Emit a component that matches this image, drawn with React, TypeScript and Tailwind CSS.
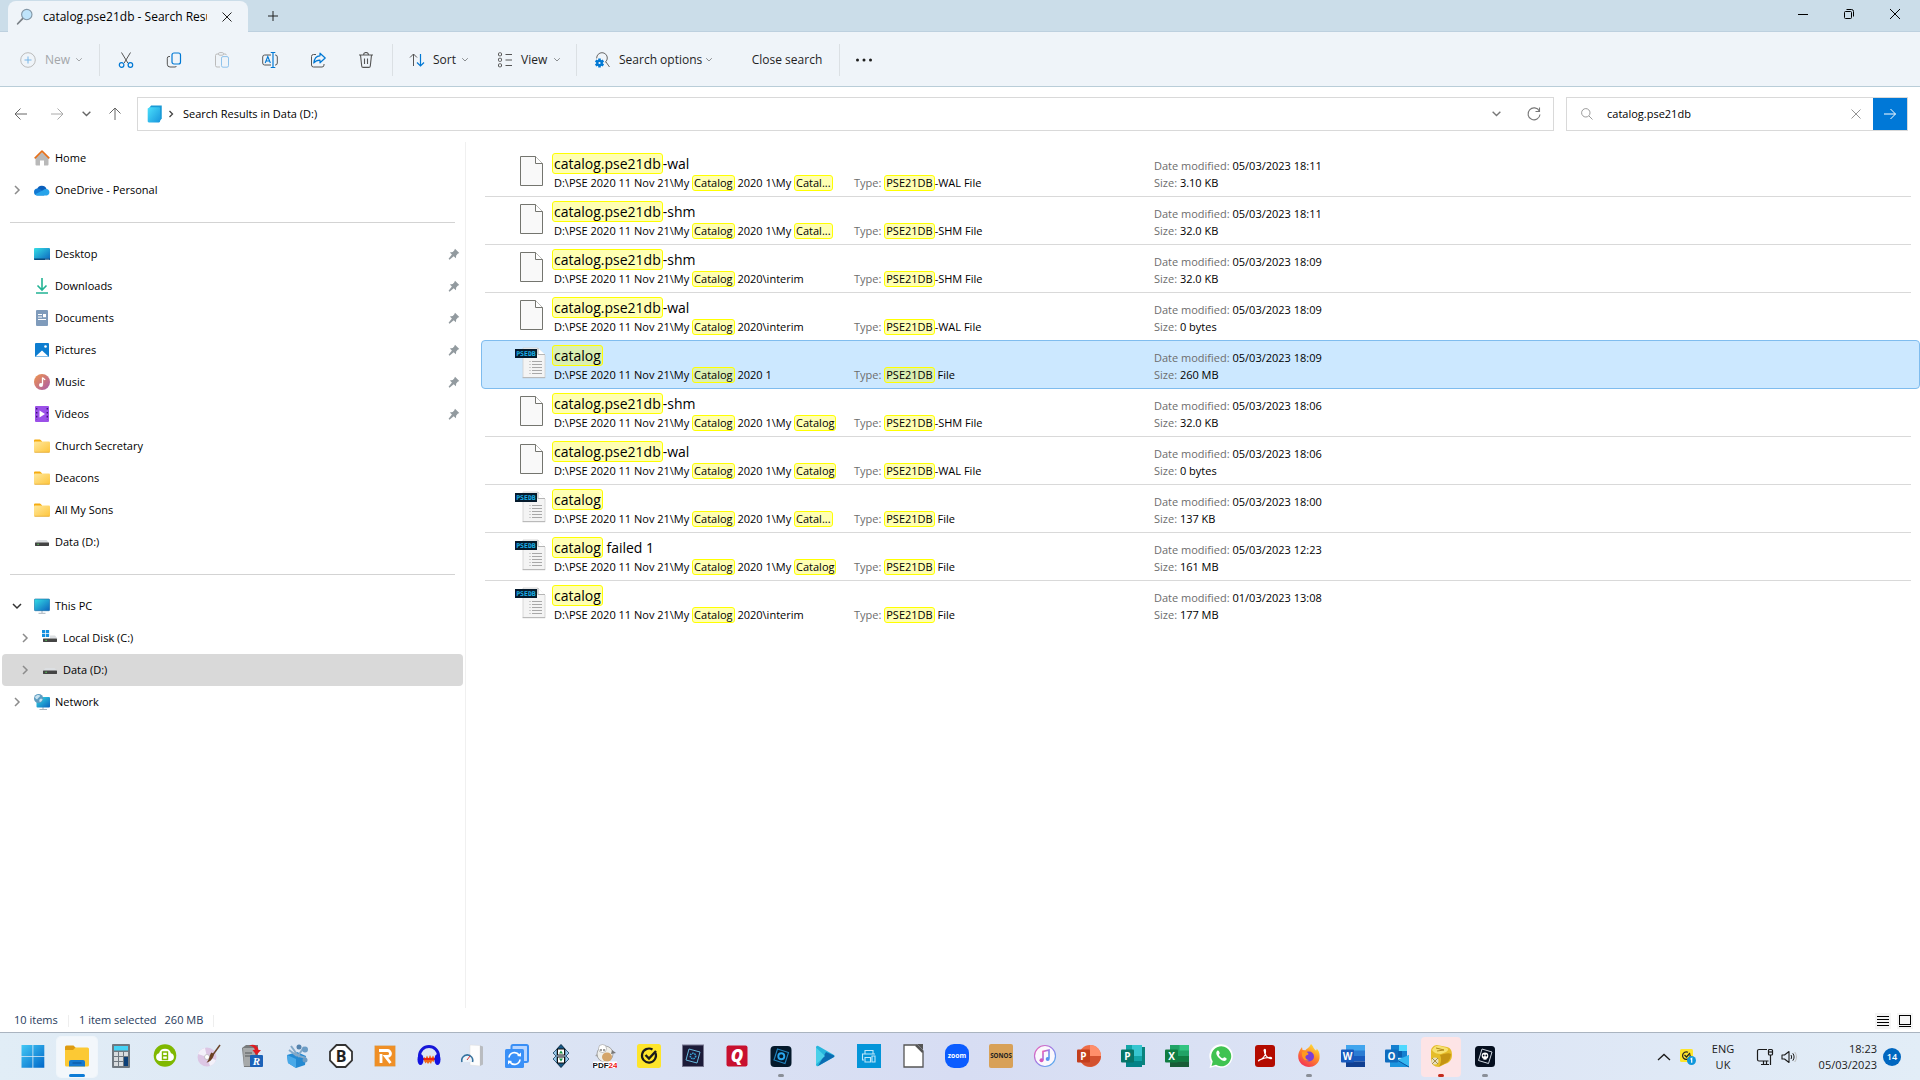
import React from 'react';

type IconProps = { children: React.ReactNode; className?: string };

const Svg16: React.FC<IconProps> = ({ children, className = 'size-4' }) => (
  <svg viewBox="0 0 16 16" fill="none" className={`${className} shrink-0`} aria-hidden="true">{children}</svg>
);

const Svg24: React.FC<IconProps> = ({ children, className = 'size-6' }) => (
  <svg viewBox="0 0 24 24" fill="none" className={`${className} shrink-0`} aria-hidden="true">{children}</svg>
);

const Chevron: React.FC<{ className?: string }> = ({ className = 'w-2 text-[#8a8d90]' }) => (
  <svg viewBox="0 0 8 6" fill="none" className={`${className} shrink-0`} aria-hidden="true">
    <path d="M1.2 1.2 4 4l2.8-2.8" stroke="currentColor" strokeWidth="1" />
  </svg>
);

/* ---------- Title bar ---------- */

const TitleBar: React.FC = () => (
  <header className="flex h-8 items-end border-b border-[#bdd0df] bg-[#cbdde9] pl-2">
    <div className="-mb-px flex h-[31px] w-60 items-center rounded-t-lg bg-[#eff4f9] pl-2 pr-[9px]">
      <Svg16 className="w-[18px]">
        <path d="m1.5 14 4.4-4.6" stroke="#7b8288" strokeWidth="1.6" strokeLinecap="round" />
        <circle cx="9.6" cy="5.8" r="4.6" fill="#bfe4fb" stroke="#8296a6" strokeWidth="1" />
      </Svg16>
      <span className="ml-[9px] w-[164px] overflow-hidden whitespace-nowrap text-[12px] leading-4 text-black">
        catalog.pse21db - Search Results in Data (D:)
      </span>
      <button type="button" aria-label="Close tab" className="ml-auto flex w-6 justify-center">
        <svg viewBox="0 0 10 10" className="size-[10px]" stroke="#222" strokeWidth="1"><path d="m.5.5 9 9m0-9-9 9" /></svg>
      </button>
    </div>
    <button type="button" aria-label="New tab" className="flex h-full w-[49px] items-center justify-center">
      <svg viewBox="0 0 10 10" className="size-[10px]" stroke="#222" strokeWidth="1"><path d="M5 0v10M0 5h10" /></svg>
    </button>
    <div className="ml-auto flex h-full items-center pb-1 pr-0.5">
      <button type="button" aria-label="Minimize" className="flex w-[46px] justify-center">
        <svg viewBox="0 0 10 10" className="size-[10px]" stroke="#000"><path d="M0 5.5h10" /></svg>
      </button>
      <button type="button" aria-label="Restore" className="flex w-[45px] justify-center">
        <svg viewBox="0 0 10 10" className="size-[10px]" fill="none" stroke="#000">
          <rect x=".5" y="2.5" width="7" height="7" rx="1" />
          <path d="M2.5.5h5a2 2 0 0 1 2 2v5" />
        </svg>
      </button>
      <button type="button" aria-label="Close" className="flex w-[47px] justify-center">
        <svg viewBox="0 0 10 10" className="size-[10px]" stroke="#000"><path d="m0 0 10 10M10 0 0 10" /></svg>
      </button>
    </div>
  </header>
);

/* ---------- Toolbar ---------- */

const ToolDivider: React.FC = () => <span className="h-8 w-px bg-[#dbe0e4]" />;

const tools = [
  {
    label: 'Cut',
    icon: (
      <>
        <path d="m3.5.5 6.4 10.6M12.5.5 6.1 11.1" stroke="#555" />
        <circle cx="3.6" cy="13" r="2.3" stroke="#0078d4" strokeWidth="1.2" />
        <circle cx="12.4" cy="13" r="2.3" stroke="#0078d4" strokeWidth="1.2" />
      </>
    ),
  },
  {
    label: 'Copy',
    icon: (
      <>
        <rect x="6" y="1" width="8.5" height="11" rx="2" stroke="#0078d4" strokeWidth="1.2" />
        <path d="M4 4.5H3a1.7 1.7 0 0 0-1.7 1.7v6A2.8 2.8 0 0 0 4 15h5a1.7 1.7 0 0 0 1.5-1" stroke="#555" />
      </>
    ),
  },
  {
    label: 'Paste',
    icon: (
      <>
        <path d="M4.5 2H3a1.5 1.5 0 0 0-1.5 1.5v10A1.5 1.5 0 0 0 3 15h3M9.5 2H11a1.5 1.5 0 0 1 1.5 1.2" stroke="#bbb" />
        <rect x="4.5" y=".6" width="5" height="2.6" rx="1.2" stroke="#bbb" />
        <rect x="7.5" y="4.6" width="7" height="10.6" rx="1.5" stroke="#8fc3ec" />
      </>
    ),
  },
  {
    label: 'Rename',
    icon: (
      <>
        <path d="M9 3H2.7A2 2 0 0 0 .7 5v6a2 2 0 0 0 2 2H9M13 3h.3a2 2 0 0 1 2 2v6a2 2 0 0 1-2 2H13" stroke="#555" />
        <path d="M11 .6v14.8M8.700.5h4.600M8.700 15.500h4.600" stroke="#0078d4" strokeWidth="1.2" />
        <path d="m3.2 11 2.600-6.500L8.400 11M4 9h3.600" stroke="#0078d4" strokeWidth="1.1" />
      </>
    ),
  },
  {
    label: 'Share',
    icon: (
      <>
        <path d="M6 2.500H3.500a2 2 0 0 0-2 2V13a2 2 0 0 0 2 2H12a2 2 0 0 0 2-2v-1" stroke="#555" />
        <path d="M10 1.200 15.200 6 10 10.800V8.200C7 8.200 5.300 9 3.800 11 4.200 7 6.300 4 10 3.800Z" stroke="#0078d4" strokeWidth="1.2" strokeLinejoin="round" />
      </>
    ),
  },
  {
    label: 'Delete',
    icon: <path d="M1 3h14M5.500 3a2.500 2.500 0 0 1 5 0M2.500 3l1.200 11a1.500 1.500 0 0 0 1.500 1.400h5.600a1.500 1.500 0 0 0 1.500-1.400L13.500 3M6.500 6.500v5.500M9.500 6.500v5.500" stroke="#555" strokeWidth="1.1" />,
  },
];

const Toolbar: React.FC = () => (
  <nav className="flex h-[55px] items-center border-b border-[#b9cdd8] bg-[#eff4f9] pt-0.5 text-[12px] text-[#1f1f1f]">
    <button type="button" disabled className="flex w-[99px] items-center pl-5 text-[#a3a6a9]">
      <Svg16>
        <circle cx="8" cy="8" r="7.3" stroke="#bbb" />
        <path d="M8 4.500v7M4.500 8h7" stroke="#76b5e8" />
      </Svg16>
      <span className="ml-[9px] w-[30px] text-left">New</span>
      <Chevron className="w-2 text-[#a3a6a9]" />
    </button>
    <ToolDivider />
    <div className="flex px-0.5">
      {tools.map((tool) => (
        <button type="button" key={tool.label} aria-label={tool.label} className="flex w-12 justify-center">
          <Svg16>{tool.icon}</Svg16>
        </button>
      ))}
    </div>
    <ToolDivider />
    <button type="button" className="flex w-[87px] items-center pl-4">
      <Svg16>
        <path d="M4.500 14V2M1 5.500 4.500 2 8 5.500" stroke="#555" />
        <path d="M11.500 2v12M8 10.500l3.500 3.500 3.500-3.500" stroke="#0078d4" strokeWidth="1.2" />
      </Svg16>
      <span className="ml-2 w-7 text-left">Sort</span>
      <Chevron />
    </button>
    <button type="button" className="flex w-[96px] items-center pl-[17px]">
      <Svg16>
        <g stroke="#555">
          <rect x="1.5" y=".8" width="3" height="3" rx=".8" />
          <rect x="1.5" y="6.3" width="3" height="3" rx=".8" />
          <rect x="1.5" y="11.8" width="3" height="3" rx=".8" />
          <path d="M8.500 2.500H15M8.500 8H15M8.500 13.500H15" />
        </g>
      </Svg16>
      <span className="ml-2 w-8 text-left">View</span>
      <Chevron />
    </button>
    <ToolDivider />
    <button type="button" className="flex w-[156px] items-center pl-[17px]">
      <Svg16>
        <circle cx="8" cy="6" r="5.3" stroke="#666" />
        <path d="m12 10 3.500 5" stroke="#666" />
        <circle cx="5.5" cy="11" r="5.5" fill="#eff4f9" />
        <path d="M5.500 6.500v9M1.600 8.700l7.800 4.600M9.400 8.700l-7.800 4.600" stroke="#0078d4" strokeWidth="2.6" />
        <circle cx="5.5" cy="11" r="3.3" fill="#0078d4" />
        <circle cx="5.5" cy="11" r="1.1" fill="#eff4f9" />
      </Svg16>
      <span className="ml-[9px] w-[86px] whitespace-nowrap text-left">Search options</span>
      <Chevron />
    </button>
    <button type="button" className="w-[106px] whitespace-nowrap pl-0.5 text-center">Close search</button>
    <ToolDivider />
    <button type="button" aria-label="See more" className="flex w-12 justify-center">
      <Svg16><g fill="#1f1f1f"><circle cx="1.5" cy="8" r="1.5" /><circle cx="8" cy="8" r="1.5" /><circle cx="14.5" cy="8" r="1.5" /></g></Svg16>
    </button>
  </nav>
);

/* ---------- Address bar ---------- */

const AddressBar: React.FC = () => (
  <div className="flex h-[55px] items-center gap-3 pb-px pl-[13px] pr-3 text-[12px]">
    <div className="flex w-28 items-center">
      <button type="button" aria-label="Back" className="w-9"><Svg16><path d="M14 8H2m5.500-5.500L2 8l5.500 5.500" stroke="#666" /></Svg16></button>
      <button type="button" aria-label="Forward" className="w-8"><Svg16><path d="M2 8h12M8.500 2.500 14 8l-5.500 5.500" stroke="#aaa" /></Svg16></button>
      <button type="button" aria-label="Recent locations" className="w-[26px]"><Chevron className="w-[11px] text-[#666]" /></button>
      <button type="button" aria-label="Up"><Svg16><path d="M8 14V2M2.500 7.500 8 2l5.500 5.500" stroke="#666" /></Svg16></button>
    </div>
    <div className="flex h-[34px] grow items-center border border-[#d9d9d9] bg-white pl-2">
      <Svg16 className="w-[18px]">
        <path d="M3 2.500 4.500.500H14v11.500l-1.500 2Z" fill="#199ad6" />
        <path d="M1.500 3 3.500 2h8a1 1 0 0 1 1 1V14.500a1 1 0 0 1-1 1h-9a1 1 0 0 1-1-1Z" fill="url(#addr)" />
        <defs><linearGradient id="addr" x1="0" y1="0" x2="1" y2="1"><stop stopColor="#4be0fb" /><stop offset="1" stopColor="#1996dd" /></linearGradient></defs>
      </Svg16>
      <svg viewBox="0 0 6 8" fill="none" className="ml-1 w-[6px]"><path d="m1.500 1 3 3-3 3" stroke="#444" strokeWidth="1.3" /></svg>
      <span className="ml-[9px] text-[11px]">Search Results in Data (D:)</span>
      <button type="button" aria-label="Previous locations" className="ml-auto"><Chevron className="w-[11px] text-[#777]" /></button>
      <button type="button" aria-label="Refresh" className="ml-6 mr-[11px]">
        <Svg16><path d="M13.300 5A6 6 0 1 0 14 8.500M13.500 1.500V5.500H9.500" stroke="#777" strokeWidth="1.1" /></Svg16>
      </button>
    </div>
    <form className="flex h-[34px] w-[342px] items-center border border-[#d9d9d9] bg-white pl-[14px]">
      <svg viewBox="0 0 12 12" fill="none" stroke="#999" className="size-3"><circle cx="4.8" cy="4.8" r="4.2" /><path d="m8 8 3.500 3.500" /></svg>
      <input aria-label="Search" defaultValue="catalog.pse21db" className="ml-[14px] min-w-0 grow text-[11px] outline-none" />
      <button type="reset" aria-label="Clear search" className="mr-3">
        <svg viewBox="0 0 10 10" className="size-[10px]" stroke="#888" strokeWidth=".9"><path d="m.5.5 9 9m0-9-9 9" /></svg>
      </button>
      <button type="button" aria-label="Go" className="flex h-8 w-[34px] items-center justify-center bg-[#0078d7]">
        <svg viewBox="0 0 12 12" fill="none" className="size-3" stroke="#fff" strokeWidth="1"><path d="M0 6h11.500M6.500 1l5 5-5 5" /></svg>
      </button>
    </form>
  </div>
);

/* ---------- Navigation pane ---------- */

const drive = (
  <>
    <path d="M3.500 6h9L15 9H1Z" fill="#dcdfe2" />
    <rect x="1" y="8.5" width="14" height="3.5" rx=".4" fill="#444" />
    <rect x="3.5" y="9.7" width="1.2" height="1.2" fill="#5be35b" />
  </>
);

const folder = (
  <>
    <path d="M0 2.500A1 1 0 0 1 1 1.500h5l2 1.700V6H0Z" fill="#f6ab0e" />
    <rect y="3.5" width="16" height="11" rx="1" fill="url(#fold)" />
    <path d="M.5 14.300h15" stroke="#e0a42e" strokeWidth=".7" />
    <defs><linearGradient id="fold" x1="0" y1="0" x2="1" y2="1"><stop stopColor="#ffe89c" /><stop offset="1" stopColor="#fec53c" /></linearGradient></defs>
  </>
);

const screenFill = (
  <defs><linearGradient id="scr" x1="0" y1="0" x2="1" y2="1"><stop stopColor="#35dfe6" /><stop offset="1" stopColor="#0c62bd" /></linearGradient></defs>
);

const home = (
  <>
    <path d="M8 2.500 1.500 8v6.500a1 1 0 0 0 1 1H6v-5h4v5h3.500a1 1 0 0 0 1-1V8Z" fill="#b9b9b9" />
    <path d="M.7 8.300 8 1.200l7.300 7.100" stroke="#e4701b" strokeWidth="1.7" strokeLinejoin="round" />
  </>
);

const oneDrive = (
  <>
    <path d="M3 7.500A5 5 0 0 1 12.500 7L9 12H2Z" fill="#0a5ebb" />
    <path d="M3.500 6.500c3 0 5.500 3.500 8.500 4l-2 3H3.500a3.500 3.500 0 0 1 0-7Z" fill="#1278d2" />
    <path d="M1.200 12.200 9 8.200a4.500 4.500 0 0 1 3.500-1.200 3.300 3.300 0 0 1 .3 6.500H3.500a3 3 0 0 1-2.300-1.300Z" fill="#27a3ea" />
  </>
);

const desktop = (
  <>
    {screenFill}
    <rect y="2" width="16" height="12" rx="1" fill="url(#scr)" />
    <path d="M0 12.500h16V13a1 1 0 0 1-1 1H1a1 1 0 0 1-1-1Z" fill="#0b4a7d" />
    <path d="M11.500 13.300h3" stroke="#fff" strokeWidth=".8" strokeDasharray="1 1" />
  </>
);

const downloads = <path d="M8 0v12M3.500 7.500 8 12l4.500-4.500M2 15h12" stroke="#22b394" strokeWidth="1.6" />;

const documents = (
  <>
    <rect x="2" width="12" height="16" rx="1" fill="#7f9bbb" />
    <path d="M4 4.500h4M4 7h4M4 9.500h8" stroke="#fff" strokeWidth="1" />
    <rect x="9" y="4" width="3" height="3.2" fill="#fff" />
  </>
);

const pictures = (
  <>
    <rect x="1" y="1" width="14" height="14" rx="1" fill="#0d7dd0" />
    <path d="m1.500 14.500 6.500-6 6.500 6Z" fill="#fff" />
    <circle cx="11.5" cy="4.5" r="1.3" fill="#fff" />
  </>
);

const music = (
  <>
    <defs><linearGradient id="mus" x1="0" y1="0" x2="1" y2="1"><stop stopColor="#f0954b" /><stop offset="1" stopColor="#a85aac" /></linearGradient></defs>
    <circle cx="8" cy="8" r="8" fill="url(#mus)" />
    <path d="M8.500 10.500V3.500c.5 1.300 2 1.200 2.500 2.500" stroke="#fff" strokeWidth="1.3" />
    <circle cx="7" cy="11" r="2" fill="#fff" />
  </>
);

const videos = (
  <>
    <rect x="1" width="14" height="16" rx="1" fill="#9b50e8" />
    <path d="M2.700 2v12M13.300 2v12" stroke="#3b1376" strokeWidth="1.4" strokeDasharray="1.6 2.3" />
    <path d="m5.500 4.500 5.500 3.500-5.500 3.500Z" fill="#fff" />
  </>
);

const thisPc = (
  <>
    {screenFill}
    <path d="M8 12v3M4.500 15.300h7" stroke="#a8b3bd" strokeWidth="1" />
    <rect x=".3" y="1" width="15.4" height="11.7" rx="1" fill="url(#scr)" stroke="#12689f" strokeWidth=".6" />
  </>
);

const localDisk = (
  <>
    <path d="M0 0h3.200v3.200H0zM3.900 0h3.200v3.200H3.900zM0 3.900h3.200v3.200H0zM3.900 3.900h3.200v3.200H3.900z" fill="#1690e0" />
    <path d="M8 5.500h5L15.500 8.500H8Z" fill="#dcdfe2" />
    <rect x="1" y="8.5" width="14" height="3.5" rx=".4" fill="#444" />
    <rect x="3.5" y="9.7" width="1.2" height="1.2" fill="#5be35b" />
  </>
);

const network = (
  <>
    {screenFill}
    <path d="M9 13v2M5.500 15.500h7.500" stroke="#a8b3bd" strokeWidth="1" />
    <rect x="2.5" y="3" width="13.5" height="10.5" rx="1" fill="url(#scr)" />
    <circle cx="4.6" cy="4.6" r="4.6" fill="#5e9cc0" />
    <path d="M1 3c2-2.500 4-2 5-1.500S4 4 3.500 5 1 4.500 1 3ZM6 5c1.500-.5 2.500 0 2.500.5S7 8 6 8s-1-2.500 0-3Z" fill="#c6e2f0" />
  </>
);

type NavItem = { label: string; icon: React.ReactNode; arrow?: 'right' | 'down'; child?: boolean; pinned?: boolean; active?: boolean };

const navGroups: NavItem[][] = [
  [
    { label: 'Home', icon: home },
    { label: 'OneDrive - Personal', icon: oneDrive, arrow: 'right' },
  ],
  [
    { label: 'Desktop', icon: desktop, pinned: true },
    { label: 'Downloads', icon: downloads, pinned: true },
    { label: 'Documents', icon: documents, pinned: true },
    { label: 'Pictures', icon: pictures, pinned: true },
    { label: 'Music', icon: music, pinned: true },
    { label: 'Videos', icon: videos, pinned: true },
    { label: 'Church Secretary', icon: folder },
    { label: 'Deacons', icon: folder },
    { label: 'All My Sons', icon: folder },
    { label: 'Data (D:)', icon: drive },
  ],
  [
    { label: 'This PC', icon: thisPc, arrow: 'down' },
    { label: 'Local Disk (C:)', icon: localDisk, arrow: 'right', child: true },
    { label: 'Data (D:)', icon: drive, arrow: 'right', child: true, active: true },
    { label: 'Network', icon: network, arrow: 'right' },
  ],
];

const NavRow: React.FC<{ item: NavItem }> = ({ item }) => (
  <li className={`flex h-8 items-center rounded-sm pr-[3px] ${item.child ? 'pl-4' : 'pl-2'} ${item.active ? 'bg-[#d9d9d9]' : ''}`}>
    <span className="flex w-6 items-center pl-px">
      {item.arrow && (
        <svg viewBox="0 0 12 12" fill="none" className="size-3" strokeWidth="1.5">
          {item.arrow === 'down' ? <path d="m2 4 4 4 4-4" stroke="#333" /> : <path d="m4 2 4 4-4 4" stroke="#8c8c8c" />}
        </svg>
      )}
    </span>
    <a href="#" className="flex items-center">
      <Svg16>{item.icon}</Svg16>
      <span className="ml-[5px] whitespace-nowrap">{item.label}</span>
    </a>
    {item.pinned && (
      <svg viewBox="0 0 12 12" className="ml-auto w-3" fill="#929a9f" aria-hidden="true">
        <path d="M7 .8 11.300 5l-1.600.8-1.500 1.700-.3 2.700L5.700 8.200 1.500 11.700.6 10.800l3.300-4.300L1.800 4.400l2.900-.3L6.200 2.500Z" />
      </svg>
    )}
  </li>
);

const NavPane: React.FC = () => (
  <aside className="w-[466px] shrink-0 border-r border-[#f0f0f0] px-0.5 text-[11px]">
    {navGroups.map((group, i) => (
      <ul key={i}>
        {group.map((item) => <NavRow key={item.label} item={item} />)}
        {i < navGroups.length - 1 && (
          <li aria-hidden="true" className="mx-2 flex h-8 items-center"><span className="h-px grow bg-[#d3d3d3]" /></li>
        )}
      </ul>
    ))}
  </aside>
);

/* ---------- Result list ---------- */

type ResultFile = { name: string; path: string; type: string; date: string; size: string; db?: boolean; selected?: boolean };

const files: ResultFile[] = [
  { name: '[catalog.pse21db]-wal', path: 'D:\\PSE 2020 11 Nov 21\\My [Catalog] 2020 1\\My [Catal...]', type: '[PSE21DB]-WAL File', date: '05/03/2023 18:11', size: '3.10 KB' },
  { name: '[catalog.pse21db]-shm', path: 'D:\\PSE 2020 11 Nov 21\\My [Catalog] 2020 1\\My [Catal...]', type: '[PSE21DB]-SHM File', date: '05/03/2023 18:11', size: '32.0 KB' },
  { name: '[catalog.pse21db]-shm', path: 'D:\\PSE 2020 11 Nov 21\\My [Catalog] 2020\\interim', type: '[PSE21DB]-SHM File', date: '05/03/2023 18:09', size: '32.0 KB' },
  { name: '[catalog.pse21db]-wal', path: 'D:\\PSE 2020 11 Nov 21\\My [Catalog] 2020\\interim', type: '[PSE21DB]-WAL File', date: '05/03/2023 18:09', size: '0 bytes' },
  { name: '[catalog]', path: 'D:\\PSE 2020 11 Nov 21\\My [Catalog] 2020 1', type: '[PSE21DB] File', date: '05/03/2023 18:09', size: '260 MB', db: true, selected: true },
  { name: '[catalog.pse21db]-shm', path: 'D:\\PSE 2020 11 Nov 21\\My [Catalog] 2020 1\\My [Catalog]', type: '[PSE21DB]-SHM File', date: '05/03/2023 18:06', size: '32.0 KB' },
  { name: '[catalog.pse21db]-wal', path: 'D:\\PSE 2020 11 Nov 21\\My [Catalog] 2020 1\\My [Catalog]', type: '[PSE21DB]-WAL File', date: '05/03/2023 18:06', size: '0 bytes' },
  { name: '[catalog]', path: 'D:\\PSE 2020 11 Nov 21\\My [Catalog] 2020 1\\My [Catal...]', type: '[PSE21DB] File', date: '05/03/2023 18:00', size: '137 KB', db: true },
  { name: '[catalog] failed 1', path: 'D:\\PSE 2020 11 Nov 21\\My [Catalog] 2020 1\\My [Catalog]', type: '[PSE21DB] File', date: '05/03/2023 12:23', size: '161 MB', db: true },
  { name: '[catalog]', path: 'D:\\PSE 2020 11 Nov 21\\My [Catalog] 2020\\interim', type: '[PSE21DB] File', date: '01/03/2023 13:08', size: '177 MB', db: true },
];

// Text in square brackets is the part that matched the search
const Matched: React.FC<{ text: string }> = ({ text }) => (
  <>
    {text.split(/(\[.*?\])/).filter(Boolean).map((part, i) =>
      part.startsWith('[') ? (
        <mark key={i} className="inline-block rounded-[3px] border border-[#ffff00] bg-[#ffff00]/30 px-px text-inherit">
          {part.slice(1, -1)}
        </mark>
      ) : (
        <span key={i} className="whitespace-pre">{part}</span>
      )
    )}
  </>
);

const FileIcon: React.FC<{ db?: boolean }> = ({ db }) =>
  db ? (
    <svg viewBox="0 0 32 32" fill="none" className="ml-[33px] size-8" aria-hidden="true">
      <path d="M9 1h15l7 7v22.500H9Z" fill="#f4f4f4" stroke="#cfcfcf" strokeWidth=".8" />
      <path d="M8.500 30.700h22.700" stroke="#aaa" strokeWidth=".8" />
      <path d="M24 1v6.500h7" fill="#fff" stroke="#b5b5b5" />
      <path d="M18 14.500h10M18 17.500h10M18 20.500h10M18 23.500h10M18 26.500h10" stroke="#a8a8a8" />
      <path d="M15.500 14.500h1M15.500 17.500h1M15.500 20.500h1M15.500 23.500h1M15.500 26.500h1" stroke="#a8a8a8" />
      <rect x="1" y="2" width="22" height="9" fill="#051a2c" />
      <text x="12" y="9.2" textAnchor="middle" fontSize="6.5" fontWeight="700" fontFamily="DejaVu Sans Mono, monospace" fill="#1cb2ea">PSEDB</text>
    </svg>
  ) : (
    <svg viewBox="0 0 32 32" fill="none" className="ml-[33px] size-8" aria-hidden="true">
      <path d="M6.500 1.500h15l7 7v22h-22Z" fill="#f9f9f9" stroke="#74756f" />
      <path d="M21.500 1.500v7h7" fill="#fff" stroke="#74756f" />
    </svg>
  );

const ResultRow: React.FC<{ file: ResultFile; last: boolean }> = ({ file, last }) => (
  <li className="relative h-12">
    {file.selected ? (
      <span className="absolute -top-px bottom-0 left-0 right-0 rounded-sm border border-[#7fbcee] bg-[#cce8ff]" />
    ) : (
      !last && <span className="absolute bottom-0 left-1 right-[9px] h-px bg-[#d9d9d9]" />
    )}
    <div className="relative grid h-full grid-cols-[71px_302px_300px_1fr] whitespace-nowrap pt-1 text-[11px] leading-[14px]">
      <div className="pt-[2px]"><FileIcon db={file.db} /></div>
      <div>
        <div className="text-[14px] leading-[19px]"><Matched text={file.name} /></div>
        <div className="mt-px pl-0.5"><Matched text={file.path} /></div>
      </div>
      <div className="pt-[22px]">
        <span className="text-[#6d6d6d]">Type: </span>
        <Matched text={file.type} />
      </div>
      <div className="flex flex-col gap-[3px] pt-[6px]">
        <div><span className="text-[#6d6d6d]">Date modified: </span>{file.date}</div>
        <div><span className="text-[#6d6d6d]">Size: </span>{file.size}</div>
      </div>
    </div>
  </li>
);

const StatusBar: React.FC = () => (
  <footer className="flex h-6 items-center whitespace-nowrap pl-[14px] pr-[7px] pt-px text-[11px] text-[#1e395b]">
    <span className="w-[54px]">10 items</span>
    <span className="h-3 w-px bg-[#eee]" />
    <span className="flex w-36 gap-2 pl-[10px]">
      <span>1 item selected</span>
      <span>260 MB</span>
    </span>
    <span className="h-3 w-px bg-[#eee]" />
    <div className="ml-auto flex gap-[6px]">
      <button type="button" aria-label="Details view" className="flex size-4 items-center justify-center bg-[#f5f5f5]">
        <svg viewBox="0 0 12 12" className="size-3" stroke="#000"><path d="M0 1.500h12M0 4.500h12M0 7.500h12M0 10.500h12" /></svg>
      </button>
      <button type="button" aria-label="Large icons view" className="flex size-4 items-center justify-center bg-[#f5f5f5]">
        <svg viewBox="0 0 12 12" className="size-3" fill="none" stroke="#000"><rect x=".5" y=".5" width="11" height="9" /><path d="M0 11.500h12" /></svg>
      </button>
    </div>
  </footer>
);

/* ---------- Taskbar ---------- */

const Glyph: React.FC<{ x?: number; y?: number; size?: number; fill?: string; children: string }> = ({ x = 12, y = 16, size = 11, fill = '#fff', children }) => (
  <text x={x} y={y} fontSize={size} fontWeight="700" fontFamily="Open Sans, sans-serif" textAnchor="middle" fill={fill}>{children}</text>
);

const OfficeIcon: React.FC<{ letter: string; tile: string; back: React.ReactNode }> = ({ letter, tile, back }) => (
  <>
    {back}
    <rect x="0" y="5.5" width="13" height="13" rx="1" fill={tile} />
    <Glyph x={6.5} y={15.7} size={10}>{letter}</Glyph>
  </>
);

type App = { name: string; icon: React.ReactNode; state?: 'active' | 'open' | 'alert' };

const apps: App[] = [
  {
    name: 'Start',
    icon: (
      <>
        <defs><linearGradient id="win" x1="0" y1="0" x2="1" y2="1"><stop stopColor="#43c8f5" /><stop offset="1" stopColor="#0067c9" /></linearGradient></defs>
        <path d="M.5 1h11v11H.5zM12.300 1h11v11h-11zM.5 12.800h11v11H.5zM12.300 12.800h11v11h-11z" fill="url(#win)" />
      </>
    ),
  },
  {
    name: 'File Explorer',
    state: 'active',
    icon: (
      <>
        <path d="M0 3a1.500 1.500 0 0 1 1.500-1.500h7L11 4v3H0Z" fill="#de9b10" />
        <path d="M0 6h8l2.500-2.500H22.500A1.500 1.500 0 0 1 24 5v16a1.500 1.500 0 0 1-1.500 1.500h-21A1.500 1.500 0 0 1 0 21Z" fill="#fcc934" />
        <path d="M4 22.500V18a2 2 0 0 1 2-2h12a2 2 0 0 1 2 2v4.500Z" fill="#1479cf" />
        <path d="M7.500 19h9" stroke="#0a56a1" strokeWidth="1.2" />
      </>
    ),
  },
  {
    name: 'Calculator',
    icon: (
      <>
        <rect x="3" width="18" height="24" rx="1" fill="#6f7880" />
        <rect x="5" y="2" width="14" height="4.5" fill="#45d2f5" />
        <path d="M5 8h4v4H5zM10 8h4v4h-4zM15 8h4v4h-4zM5 13h4v4H5zM10 13h4v4h-4zM5 18h4v4H5zM10 18h4v4h-4z" fill="#d8dcdf" />
        <path d="M15 13h4v9h-4z" fill="#0b3f78" />
      </>
    ),
  },
  {
    name: 'Cloud Storage',
    icon: (
      <>
        <circle cx="12" cy="11.5" r="11.3" fill="#7fb800" />
        <path d="M6.500 17a4 4 0 0 1-.5-7.800 6.300 6.300 0 0 1 12 0 4 4 0 0 1-.5 7.800Z" fill="#fff" />
        <path d="M9.500 8h5v7.500h-5ZM9.500 11.800h5" stroke="#7fb800" strokeWidth="1.4" />
      </>
    ),
  },
  {
    name: 'Disc Label',
    icon: (
      <>
        <circle cx="10" cy="13" r="9.5" fill="#dcc6e4" />
        <path d="m10 13-9-3a9.500 9.500 0 0 1 7-6ZM10 13l9 3a9.500 9.500 0 0 1-6 6Z" fill="#f3f1fa" />
        <circle cx="10" cy="13" r="2.5" fill="#fff" stroke="#aaa" strokeWidth=".6" />
        <path d="m23 1-8 11" stroke="#6b4529" strokeWidth="1.5" />
        <path d="m17 10-2.500-1.500C12 11 13 15 9.500 18.500 13.500 18 16.500 14 17 10Z" fill="#6a3f22" />
      </>
    ),
  },
  {
    name: 'Revo Uninstaller',
    icon: (
      <>
        <path d="m1 4 4-3h12v20l-3 2H3Z" fill="#777a7c" />
        <path d="M2 4h12v18H3Z" fill="#a6a9aa" />
        <path d="M4 9h7M4 12h7" stroke="#55585a" />
        <path d="M8 1.500c6-2 9 1 9.500 4.500h2.500l-4.500 5-4-5h2.300C13.500 3.500 11.500 2 8 1.500Z" fill="#e01b22" />
        <rect x="9" y="11" width="13" height="12" rx="1" fill="#1c62b8" />
        <text x="15.5" y="21" fontSize="11" fontStyle="italic" fontWeight="700" fontFamily="Liberation Serif, serif" textAnchor="middle" fill="#fff">R</text>
      </>
    ),
  },
  {
    name: 'Tool Box',
    icon: (
      <>
        <path d="m2 11 10-3 9 4-1 9-9 3-8-5Z" fill="#2389d2" />
        <path d="m2 11 9 4v9l-8-5Z" fill="#49a9e8" />
        <path d="m6 2 8 11M19 3l-6 9M4 6l8 6M21 14l-7-2" stroke="#84a9c8" strokeWidth="2" />
        <circle cx="14" cy="3" r="2.5" fill="#5382ad" /><circle cx="20" cy="5.5" r="3" fill="#6b9cc5" /><circle cx="20" cy="16" r="2.5" fill="#6b9cc5" />
      </>
    ),
  },
  {
    name: 'Brackets',
    icon: (
      <>
        <path d="M7.500 1h9L23 7.500v9L16.500 23h-9L1 16.500v-9Z" fill="#fff" stroke="#333" strokeWidth="1.8" />
        <Glyph size={16} y={17.8} fill="#222">B</Glyph>
      </>
    ),
  },
  {
    name: 'RoboForm',
    icon: (
      <>
        <rect x="1.5" y="1.5" width="21" height="21" rx="1" fill="#ef8f26" stroke="#d9c5a9" />
        <path d="M6 6.500h8.500a3 3 0 0 1 0 6H12.500l5 6.500M8 10v9" stroke="#fff" strokeWidth="2.8" />
      </>
    ),
  },
  {
    name: 'Audacity',
    icon: (
      <>
        <path d="M2.500 15V12a9.500 9.500 0 0 1 19 0v3" stroke="#1616d8" strokeWidth="3" />
        <path d="m6 15 1.500-2 1 1.500 1.500-3 1.500 3 1.500-3.500 1.500 3 1.500-2.500L18 15l-1.500 3-1.500-1-1 3-1.500-2-1.500 2-1.500-2-1 1.500Z" fill="#f26a16" />
        <path d="M6 15h12" stroke="#e11" strokeWidth="1.5" />
        <ellipse cx="3.5" cy="15.5" rx="3" ry="5.5" fill="#1313e0" /><ellipse cx="20.5" cy="15.5" rx="3" ry="5.5" fill="#1313e0" />
      </>
    ),
  },
  {
    name: 'Disk Benchmark',
    icon: (
      <>
        <path d="m9 1 10 .5V22l-10-1Z" fill="#fdfdfd" stroke="#ddd" strokeWidth=".5" />
        <path d="m19 1.500 3 1v18L19 22Z" fill="#b9bcc0" />
        <path d="M1 18A5.500 5.500 0 1 1 11.500 18" fill="#eef4fa" stroke="#35729f" strokeWidth="1.6" />
        <path d="m6 16 3-4" stroke="#d33" strokeWidth="1" />
      </>
    ),
  },
  {
    name: 'Sync Backup',
    icon: (
      <>
        <rect x="6.5" y="1" width="16.5" height="17" rx="1.5" fill="#b9d6ff" stroke="#3a8ff5" strokeWidth="2" />
        <rect y="5" width="19" height="19" rx="1.5" fill="#3a90f7" />
        <path d="M4 13.500a5.500 5.500 0 0 1 10-2.500M15 15.500A5.500 5.500 0 0 1 5 18" stroke="#fff" strokeWidth="1.7" />
        <path d="m12 12 4 .5V8.500ZM7 17l-4-.5v4Z" fill="#fff" />
      </>
    ),
  },
  {
    name: 'File Compare',
    icon: (
      <>
        <path d="m12 .5 5 5.500H7Z" fill="#155888" stroke="#0a2d45" /><path d="m12 23.500 5-5.500H7Z" fill="#155888" stroke="#0a2d45" />
        <path d="M8 5 4 9l3 3-3 3 4 4ZM16 5l4 4-3 3 3 3-4 4Z" fill="#98c7ea" stroke="#16405e" strokeWidth=".8" />
        <path d="M8.500 5h7v6h-7zM8.500 13h7v6h-7z" fill="#fff" stroke="#111" />
        <path d="m12 6.500 2 3h-4ZM12 17.500l2-3h-4Z" fill="#169347" />
      </>
    ),
  },
  {
    name: 'PDF24',
    icon: (
      <>
        <path d="M6 8 2 12l5 1Z" fill="#aaa" /><ellipse cx="12" cy="10" rx="8" ry="8" fill="#efefeb" stroke="#888" strokeWidth=".7" />
        <circle cx="9.5" cy="4.5" r="4" fill="#fff" stroke="#999" strokeWidth=".6" /><circle cx="8" cy="6" r=".8" fill="#222" /><circle cx="11" cy="6" r=".8" fill="#222" />
        <ellipse cx="14" cy="13" rx="5" ry="4.5" fill="#d4a56a" /><path d="m19 6 4 3-5 1Z" fill="#777" />
        <rect y="17.5" width="24" height="6.5" fill="#fff" />
        <text x="12" y="23.5" textAnchor="middle" fontSize="8" fontWeight="700" fontFamily="Liberation Sans, sans-serif" fill="#111">PDF<tspan fill="#e11">24</tspan></text>
      </>
    ),
  },
  {
    name: 'Norton',
    icon: (
      <>
        <rect width="24" height="24" rx="2.5" fill="#fee52b" />
        <path d="M18.500 9A7 7 0 1 1 15.500 5.500" stroke="#1a1a1a" strokeWidth="2.2" />
        <path d="m8.500 11 3.500 3.500L19 7" stroke="#1a1a1a" strokeWidth="2.4" />
      </>
    ),
  },
  {
    name: 'Elements Editor',
    icon: (
      <>
        <rect x="1.5" y="1" width="21" height="21.5" fill="#1c1b38" stroke="#77778f" />
        <path d="m8 5 11 3-3 11-11-3Z" stroke="#67b9dc" /><circle cx="12" cy="12" r="2.7" stroke="#35a8da" strokeWidth="1.6" strokeDasharray="1.5 .8" />
      </>
    ),
  },
  {
    name: 'Quicken',
    icon: (
      <>
        <rect x="1.5" y="1.5" width="21" height="21" rx="2" fill="#c8102e" />
        <text x="12" y="18" fontSize="17" fontWeight="800" fontStyle="italic" fontFamily="Open Sans, sans-serif" textAnchor="middle" fill="#fff">Q</text>
      </>
    ),
  },
  {
    name: 'Photoshop Elements',
    state: 'open',
    icon: (
      <>
        <rect x="1.5" y="2" width="21" height="21" rx="4" fill="#04192b" />
        <path d="m8.500 5 11 3.500-3.500 11-11-3.500Z" stroke="#2384be" strokeWidth="1.1" /><circle cx="12.3" cy="12.3" r="3" stroke="#2aa7ee" strokeWidth="1.9" />
      </>
    ),
  },
  {
    name: 'Media Player',
    icon: (
      <>
        <path d="M3 3.500A1.500 1.500 0 0 1 5.300 2L21 11a1.300 1.300 0 0 1 0 2L5.300 22A1.500 1.500 0 0 1 3 20.500Z" fill="#27b5dc" />
        <path d="m5 22 8-14 8 3.500a1 1 0 0 1 0 1.500Z" fill="#0b6cb2" /><path d="M3 3.500v17L12 12Z" fill="#4ad0e9" />
      </>
    ),
  },
  {
    name: 'Printer Manager',
    icon: (
      <>
        <rect width="24" height="24" fill="#0495d9" />
        <path d="M8 10V6.500h8V10M7 16H5.500v-6H18M8 13.500h5.500V18H8ZM15 12h3v6h-3Z" stroke="#bfe7fa" strokeWidth="1.1" />
      </>
    ),
  },
  {
    name: 'LibreOffice',
    icon: (
      <>
        <path d="M16 0h6v6Z" fill="#555" />
        <path d="M3 1h12l7 7v15H3Z" fill="#fff" stroke="#555" strokeWidth="1.3" /><path d="m15 1 7 7" stroke="#555" strokeWidth="2.5" />
      </>
    ),
  },
  {
    name: 'Zoom',
    icon: (
      <>
        <rect width="24" height="24" rx="9" fill="#0b5cff" />
        <Glyph size={6.8} y={14}>zoom</Glyph>
      </>
    ),
  },
  {
    name: 'Sonos',
    icon: (
      <>
        <rect width="24" height="24" rx="2" fill="#d8a158" />
        <Glyph size={6.2} y={14.2} fill="#222">SONOS</Glyph>
      </>
    ),
  },
  {
    name: 'iTunes',
    icon: (
      <>
        <defs><linearGradient id="itu" x1="0" y1="0" x2="1" y2="1"><stop stopColor="#f35db0" /><stop offset=".5" stopColor="#9a7de8" /><stop offset="1" stopColor="#45b8f0" /></linearGradient></defs>
        <circle cx="12" cy="12" r="10.5" fill="#fbf8fd" stroke="url(#itu)" strokeWidth="1.2" />
        <path d="M10 16V7.500l6-1.500v8.500" stroke="url(#itu)" strokeWidth="1.7" />
        <circle cx="8.5" cy="16.3" r="2" fill="#d557bd" /><circle cx="14.7" cy="15" r="2" fill="#5a92ee" />
      </>
    ),
  },
  {
    name: 'PowerPoint',
    icon: <OfficeIcon letter="P" tile="#c33e1c" back={<><circle cx="13" cy="12" r="11" fill="#ed6c47" /><path d="M13 1a11 11 0 0 1 11 11H13Z" fill="#ff8f6b" /><path d="M2.500 15A11 11 0 0 0 24 12H13v3Z" fill="#d35230" /></>} />,
  },
  {
    name: 'Publisher',
    icon: <OfficeIcon letter="P" tile="#077568" back={<><path d="M21 3h3v18h-3z" fill="#0a837c" /><path d="M5 1h16v22H5z" fill="#12a5a7" /><path d="M11 1h10v11H11z" fill="#37c6d0" /><path d="M5 17h16v6H5z" fill="#038387" /></>} />,
  },
  {
    name: 'Excel',
    icon: <OfficeIcon letter="X" tile="#107c41" back={<><path d="M5 1h19v22H5z" fill="#21a366" /><path d="M14.500 1H24v5.500h-9.500z" fill="#33c481" /><path d="M5 12h19v5.500H5z" fill="#107c41" /><path d="M5 17.500h19V23H5z" fill="#185c37" /></>} />,
  },
  {
    name: 'WhatsApp',
    icon: (
      <>
        <path d="m.5 24 1.500-6A11.700 11.700 0 1 1 6.500 22.300Z" fill="#fff" />
        <path d="m2.500 22 1.200-4.500a10 10 0 1 1 3.300 3.300Z" fill="#40c351" />
        <path d="M8.500 6.500c-2 1.500-1.500 4.500 1.500 7.500s6.500 4 7.500 1.500c.5-1-.2-1.300-2-2.200-.8-.3-1.200 1.300-2 1-1.800-.8-3-2-3.500-3.300-.2-.8 1-1.200.7-2-.6-1.500-.8-2.700-2.200-2.500Z" fill="#fff" />
      </>
    ),
  },
  {
    name: 'Acrobat',
    icon: (
      <>
        <rect x="2" y="1" width="20" height="22" rx="3" fill="#b30b00" />
        <path d="M6 16.500c5-2 7-6.500 6.300-10.500-.2-1-1.300-.5-1.100.5.500 4 3 7.500 6.500 8 1.300.2 1-1.200-.5-1.200-4 0-7.500 1-10.700 2.500-1.300.7-1 1.300-.5.700Z" stroke="#fff" strokeWidth="1.3" />
      </>
    ),
  },
  {
    name: 'Firefox',
    state: 'open',
    icon: (
      <>
        <defs><linearGradient id="ffx" x1=".8" y1="0" x2=".2" y2="1"><stop stopColor="#ffe93a" /><stop offset=".45" stopColor="#ff8c27" /><stop offset="1" stopColor="#f2295b" /></linearGradient></defs>
        <path d="M14 0c3 3 2 4.500 5 6.500 1-.5.500-2 .5-2 3 2.500 3.500 6.500 3 10-1 5.500-5.500 8.500-10.500 8.500S1 19 1.200 12C1.500 7.500 3.500 5.500 5 3l.5 3 3 .2C10 4.500 12 4 14 0Z" fill="url(#ffx)" />
        <circle cx="12" cy="12.5" r="5" fill="#7b3fd6" /><path d="M5 8c3-1 6 0 6.500 2 .2 1-2.500 1-3 2.500s1 3.500 3.500 3.500c-4 2-8-2-7-8Z" fill="#ff9a1f" />
      </>
    ),
  },
  {
    name: 'Word',
    icon: <OfficeIcon letter="W" tile="#185abd" back={<><path d="M5 1h19v6H5z" fill="#41a5ee" /><path d="M5 6.500h19V12H5z" fill="#2b7cd3" /><path d="M5 12h19v5.500H5z" fill="#185abd" /><path d="M5 17.500h19V23H5z" fill="#103f91" /></>} />,
  },
  {
    name: 'Outlook',
    icon: <OfficeIcon letter="O" tile="#0f6cbd" back={<><path d="M6 1h16v13H6z" fill="#1480d0" /><path d="M14 1h8v6h-8z" fill="#50d9ff" /><path d="M11 7h6v6h-6z" fill="#0b5fae" /><path d="M5 11l9 6 10-6v12H5z" fill="#1c95de" /><path d="m12 16 12 7V11Z" fill="#35b8f1" /><path d="m12 16 12 7" stroke="#0a52a0" /></>} />,
  },
  {
    name: 'Fiddler Box',
    state: 'alert',
    icon: (
      <>
        <path d="M2 7c0-3 3-6 6-6l10 2c4 1 5 4 5 8 0 5-3 8-7 9l-6 3c-5 0-8-3-8-8Z" fill="#e5bd2a" />
        <path d="M3 6c2-4 5-5 8-4l7 2c2 1 1 3-1 4l-5 2c-4 0-7-1-9-4Z" fill="#f7e170" />
        <path d="M11 11c3-1 9-3 11-1-.5 6-3 8-6 9.500l-6 3c2-3 3-8 1-11.500Z" fill="#c59413" />
        <path d="m7 4 8 2M8 7l7-1" stroke="#b38c1c" /><circle cx="6" cy="17" r="3.5" fill="#e8e0bf" /><path d="m3 14 6 6M9 14l-6 6" stroke="#a78e45" />
      </>
    ),
  },
  {
    name: 'Organizer',
    state: 'open',
    icon: (
      <>
        <rect x="2" y="2" width="20" height="21" rx="3.5" fill="#050f1f" />
        <path d="m9 5 10 3-3.500 11.500-10-3Z" stroke="#cfd6df" />
        <circle cx="12" cy="11.7" r="3.3" fill="#fff" /><path d="M10.500 14h3v1.700h-3z" fill="#fff" />
        <circle cx="10.7" cy="11.5" r=".9" fill="#050f1f" /><circle cx="13.3" cy="11.5" r=".9" fill="#050f1f" />
      </>
    ),
  },
];

const TaskButton: React.FC<{ app: App }> = ({ app }) => (
  <button
    type="button"
    aria-label={app.name}
    className={`relative mx-0.5 flex h-10 w-10 items-center justify-center rounded pb-0.5 ${
      app.state === 'active' ? 'bg-white/60 ring-1 ring-white/50' : app.state === 'alert' ? 'bg-[#fde4e6]' : ''
    }`}
  >
    <Svg24>{app.icon}</Svg24>
    {app.state === 'active' && <span className="absolute bottom-0 h-[3px] w-4 rounded-full bg-[#0c7bd6]" />}
    {app.state === 'open' && <span className="absolute bottom-0 h-[3px] w-[6px] rounded-full bg-[#8a8f98]" />}
    {app.state === 'alert' && <span className="absolute bottom-0 h-[3px] w-[6px] rounded-full bg-[#c42b1c]" />}
  </button>
);

const Taskbar: React.FC = () => (
  <div className="flex h-12 items-center justify-between border-t border-[#aab4c0] bg-linear-to-r from-[#e1edf6] via-[#d7ddf3] to-[#e2edf7] pl-[11px] pr-[19px]">
    <div className="flex shrink-0">
      {apps.map((app) => <TaskButton key={app.name} app={app} />)}
    </div>
    <div className="flex shrink-0 items-center text-[11px] leading-4 text-[#1b1b1b]">
      <button type="button" aria-label="Show hidden icons">
        <svg viewBox="0 0 14 8" fill="none" className="w-[14px]"><path d="m1 7 6-5.500L13 7" stroke="#1b1b1b" strokeWidth="1.3" /></svg>
      </button>
      <button type="button" aria-label="Norton status" className="ml-[9px]">
        <Svg16>
          <rect width="13" height="13" rx="1.5" fill="#fee52b" />
          <path d="M10 5.500A3.800 3.800 0 1 1 8 3.200M4.500 6l2 2L10 4" stroke="#222" strokeWidth="1.2" />
          <circle cx="11.5" cy="11.5" r="4.5" fill="#1097dc" /><path d="m10.500 10.200 1.200-.8v4.300" stroke="#fff" strokeWidth="1.2" />
        </Svg16>
      </button>
      <button type="button" className="ml-[10px] w-[34px] text-center">ENG<br />UK</button>
      <button type="button" aria-label="Network and volume" className="ml-4 flex items-center gap-[7px]">
        <svg viewBox="0 0 18 18" fill="none" stroke="#1b1b1b" strokeWidth="1.2" className="size-[18px]">
          <path d="M11 1.500H3A1.500 1.500 0 0 0 1.500 3v8.500A1.500 1.500 0 0 0 3 13h9.500M5 16.500h8M7.500 13v3.500M10.500 13v3.500M14.500 7v10" />
          <rect x="12.5" y="1.5" width="4" height="5.5" rx="1" /><path d="M12.500 4h4" />
        </svg>
        <Svg16>
          <path d="M1 6v4h2.500L8 13.500v-11L3.500 6Z" stroke="#1b1b1b" strokeWidth="1.1" strokeLinejoin="round" />
          <path d="M10 6c.8 1.300.8 2.700 0 4M11.800 4.300c1.700 2.300 1.700 5 0 7.400" stroke="#1b1b1b" /><path d="M13.700 3c2.300 3 2.300 7 0 10" stroke="#bbb" />
        </Svg16>
      </button>
      <button type="button" className="ml-4 w-16 text-right">18:23<br />05/03/2023</button>
      <button type="button" aria-label="14 notifications" className="ml-[6px] flex size-[18px] items-center justify-center rounded-full bg-[#0067c0] text-[9px] font-semibold text-white">14</button>
    </div>
  </div>
);

const App: React.FC = () => (
  <div className="flex min-h-screen flex-col bg-white font-['Open_Sans','Noto_Sans',sans-serif] text-black">
    <TitleBar />
    <Toolbar />
    <AddressBar />
    <div className="flex grow">
      <NavPane />
      <main className="min-w-0 grow pl-[15px] pt-[7px]">
        <ul>
          {files.map((file, i) => <ResultRow key={i} file={file} last={i === files.length - 1} />)}
        </ul>
      </main>
    </div>
    <StatusBar />
    <Taskbar />
  </div>
);

export default App;
